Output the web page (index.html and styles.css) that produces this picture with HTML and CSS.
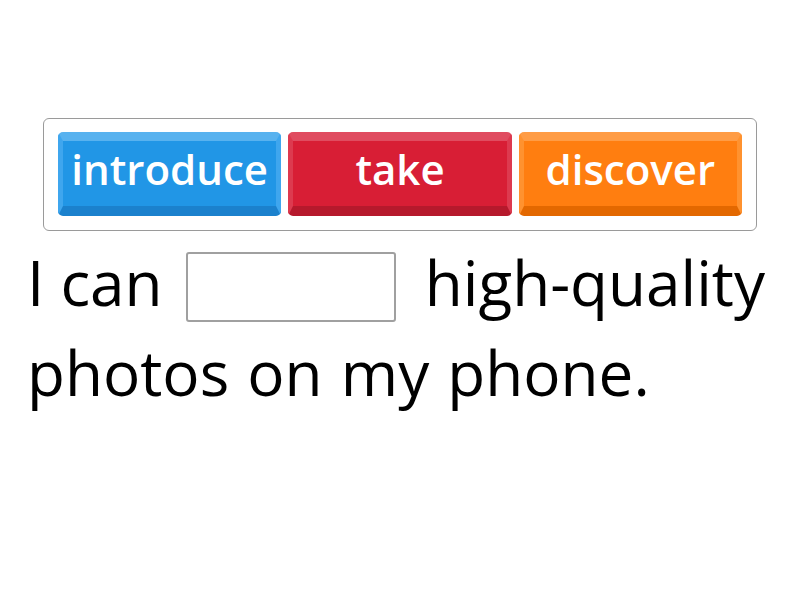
FILE: index.html
```html
<!DOCTYPE html>
<html>
<head>
<meta charset="utf-8">
<link rel="stylesheet" href="styles.css">
</head>
<body>
<div class="bank">
  <div class="tile blue"><span>introduce</span></div>
  <div class="tile red"><span>take</span></div>
  <div class="tile orange"><span>discover</span></div>
</div>
<div class="sentence">
  <p class="line">I can <span class="blank"></span> high-quality</p>
  <p class="line">photos on my phone.</p>
</div>
</body>
</html>
```
FILE: styles.css
```css
html, body {
  margin: 0;
  padding: 0;
  background: #ffffff;
}
body {
  font-family: "Open Sans", "Liberation Sans", sans-serif;
  color: #000;
  width: 800px;
  height: 600px;
  overflow: hidden;
}
.bank {
  box-sizing: border-box;
  margin: 118px 0 0 43px;
  width: 714px;
  height: 113px;
  border: 1px solid #9a9a9a;
  border-radius: 6px;
  padding: 13px 14px 14px 14px;
  display: flex;
  gap: 7px;
}
.tile {
  box-sizing: border-box;
  flex: 1;
  height: 84px;
  border-radius: 5px;
  border-style: solid;
  border-width: 9px 5px 10px 5px;
  display: flex;
  align-items: center;
  justify-content: center;
  color: #fff;
  font-weight: 600;
  font-size: 42px;
  line-height: 1;
}
.tile span {
  margin-top: -9px;
}
.blue {
  background: #2196e6;
  border-color: #58b2ef #3fa6ee #1b81cd #3fa6ee;
}
.red {
  background: #d81e35;
  border-color: #e04c60 #dd3a4f #b6192c #dd3a4f;
}
.orange {
  background: #ff7e10;
  border-color: #ff9c45 #ff922f #e36800 #ff922f;
}
.sentence {
  padding-left: 27px;
  margin-top: 6px;
  font-size: 62px;
  line-height: 90px;
}
.line {
  margin: 0;
  white-space: nowrap;
}
.line + .line {
  word-spacing: 2px;
}
.blank {
  display: inline-block;
  box-sizing: border-box;
  width: 210px;
  height: 70px;
  border: 2px solid #a0a0a0;
  border-radius: 3px;
  margin: 0 13px 0 7px;
  vertical-align: -16px;
}
```
